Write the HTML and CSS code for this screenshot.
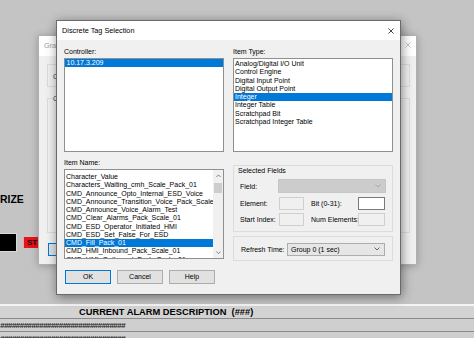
FILE: index.html
```html
<!DOCTYPE html>
<html>
<head>
<meta charset="utf-8">
<title>Discrete Tag Selection</title>
<link rel="stylesheet" href="styles.css">
</head>
<body>
<div class="screen">
  <div class="desk">
    <div class="hmi-label">RIZE</div>
    <div class="hmi-black"></div>
    <div class="hmi-stop">ST</div>

    <div class="win win-back">
      <div class="titlebar">
        <span class="title">Gra</span>
        <svg class="close" viewBox="0 0 7 7"><path d="M0.5 0.5L6.5 6.5M6.5 0.5L0.5 6.5" stroke="#a8a8a8" stroke-width="0.8" fill="none"/></svg>
      </div>
      <div class="back-body">
        <div class="back-group">C</div>
        <fieldset class="back-frame"><legend>C</legend></fieldset>
        <div class="back-btn"></div>
      </div>
    </div>

    <div class="win win-main">
      <div class="titlebar">
        <span class="title">Discrete Tag Selection</span>
        <svg class="close" viewBox="0 0 7 7"><path d="M0.5 0.5L6.5 6.5M6.5 0.5L0.5 6.5" stroke="#111" stroke-width="0.9" fill="none"/></svg>
      </div>
      <div class="dlg-body">
        <div class="col">
          <div class="lbl">Controller:</div>
          <div class="list list-ctrl">
            <div class="item sel">10.17.3.209</div>
          </div>
          <div class="lbl lbl-gap">Item Name:</div>
          <div class="list list-names">
            <div class="names">
              <div class="item">Character_Value</div>
              <div class="item">Characters_Waiting_cmh_Scale_Pack_01</div>
              <div class="item">CMD_Announce_Opto_Internal_ESD_Voice</div>
              <div class="item">CMD_Announce_Transition_Voice_Pack_Scale</div>
              <div class="item">CMD_Announce_Voice_Alarm_Test</div>
              <div class="item">CMD_Clear_Alarms_Pack_Scale_01</div>
              <div class="item">CMD_ESD_Operator_Initiated_HMI</div>
              <div class="item">CMD_ESD_Set_False_For_ESD</div>
              <div class="item sel">CMD_Fill_Pack_01</div>
              <div class="item">CMD_HMI_Inbound_Pack_Scale_01</div>
              <div class="item">CMD_HMI_Outbound_Pack_Scale_01</div>
            </div>
            <div class="vscroll">
              <div class="sarrow"><svg viewBox="0 0 6 4"><polyline points="0.5,3.5 3,1 5.5,3.5" fill="none" stroke="#606060" stroke-width="0.9"/></svg></div>
              <div class="strack"><div class="thumb"></div></div>
              <div class="sarrow"><svg viewBox="0 0 6 4"><polyline points="0.5,0.5 3,3 5.5,0.5" fill="none" stroke="#606060" stroke-width="0.9"/></svg></div>
            </div>
          </div>
          <div class="btns">
            <div class="btn btn-default">OK</div>
            <div class="btn">Cancel</div>
            <div class="btn">Help</div>
          </div>
        </div>

        <div class="col">
          <div class="lbl">Item Type:</div>
          <div class="list list-type">
            <div class="item">Analog/Digital I/O Unit</div>
            <div class="item">Control Engine</div>
            <div class="item">Digital Input Point</div>
            <div class="item">Digital Output Point</div>
            <div class="item sel">Integer</div>
            <div class="item">Integer Table</div>
            <div class="item">Scratchpad Bit</div>
            <div class="item">Scratchpad Integer Table</div>
          </div>
          <div class="group fields">
            <div class="legend">Selected Fields</div>
            <div class="fgrid">
              <span class="fl">Field:</span>
              <div class="combo combo-off"><svg viewBox="0 0 6 4"><polyline points="0.5,0.5 3,3 5.5,0.5" fill="none" stroke="#a5a5a5" stroke-width="0.9"/></svg></div>
              <span class="fl">Element:</span>
              <div class="box"></div>
              <span></span>
              <span class="fl">Bit (0-31):</span>
              <div class="box box-on"></div>
              <span class="fl">Start Index:</span>
              <div class="box"></div>
              <span></span>
              <span class="fl">Num Elements:</span>
              <div class="box"></div>
            </div>
          </div>
          <div class="group refresh">
            <span class="fl rl">Refresh Time:</span>
            <div class="combo combo-on"><span>Group 0 (1 sec)</span><svg viewBox="0 0 6 4"><polyline points="0.5,0.5 3,3 5.5,0.5" fill="none" stroke="#555" stroke-width="0.9"/></svg></div>
          </div>
        </div>
      </div>
    </div>
  </div>

  <div class="strip">
    <div class="hl"></div>
    <div class="band band-title">CURRENT ALARM DESCRIPTION&nbsp; (###)</div>
    <div class="band band-hash">################################</div>
    <div class="band band-hash last">################################</div>
  </div>
</div>
</body>
</html>
```

FILE: styles.css
```css
* { box-sizing: border-box; }
html, body { margin: 0; padding: 0; }
body {
  width: 474px;
  height: 338px;
  overflow: hidden;
  background: #c4c4c4;
  font-family: "Liberation Sans", Arial, sans-serif;
  font-size: 7px;
  color: #000;
}
.screen { display: flex; flex-direction: column; height: 338px; }
.desk { position: relative; height: 304px; flex: none; }

/* HMI canvas items */
.hmi-label {
  position: absolute; left: 0; top: 194px;
  font-weight: bold; font-size: 10.4px; line-height: 12px; color: #000;
}
.hmi-black {
  position: absolute; left: 0; top: 233px; width: 17px; height: 19px;
  background: #000; border: 1px solid #d9d9d9; border-left: none;
}
.hmi-stop {
  position: absolute; left: 23px; top: 237px; width: 20px; height: 11px;
  background: #e3141c; border-left: 1px solid #f3a0a0;
  font-weight: bold; font-size: 8px; line-height: 11px; padding-left: 3px; color: #2a0505;
}

/* windows */
.win { position: absolute; display: flex; flex-direction: column; background: #f0f0f0; }
.win-back {
  left: 38px; top: 35px; width: 379px; height: 230px;
  border: 1px solid #b0b0b0;
  box-shadow: 0 1px 8px rgba(0,0,0,0.25);
}
.win-main {
  left: 56px; top: 20px; width: 345px; height: 275px;
  border: 1px solid #6a6a6a;
  box-shadow: 1px 2px 10px rgba(0,0,0,0.45);
}
.titlebar {
  flex: none; height: 19px; background: #fff;
  display: flex; align-items: center; justify-content: space-between;
  padding: 0 6px 0 5px;
}
.win-back .titlebar { height: 20px; padding: 0 5px 2px 5px; }
.title { font-size: 7.3px; white-space: nowrap; }
.win-back .title { color: #9c9c9c; }
.close { width: 6px; height: 6px; display: block; }

/* back dialog body */
.back-body { flex: 1; display: flex; flex-direction: column; padding: 8px 6px 0 8px; }
.back-group { height: 23px; border: 1px solid #dcdcdc; padding-left: 5px; line-height: 23px; color: #333; }
.back-frame {
  margin: 7px 0 0; padding: 0; min-width: 0; height: 139px;
  border: 1px solid #dcdcdc;
}
.back-frame legend { padding: 0 1px; margin-left: 4px; line-height: 9px; font-size: 7px; color: #333; }
.back-btn {
  margin: 10px 0 0 1px; width: 46px; height: 13px;
  border: 1px solid #0078d7; background: #e1e1e1;
}

/* main dialog body */
.dlg-body {
  flex: 1;
  display: grid;
  grid-template-columns: 160px 160px;
  column-gap: 9px;
  align-content: start;
  padding: 6px 7px 0 7px;
}
.col { display: flex; flex-direction: column; }
.lbl { height: 11px; line-height: 11px; white-space: nowrap; }
.lbl-gap { margin-top: 5px; }
.list { background: #fff; border: 1px solid #8e8f8f; overflow: hidden; margin-top: 1px; }
.list-ctrl { height: 94px; }
.list-type { height: 94px; padding-top: 1px; }
.list-names { height: 90px; display: flex; }
.names { flex: 1; min-width: 0; padding-top: 3px; overflow: hidden; }
.item { height: 8.25px; line-height: 8.25px; padding-left: 1px; white-space: nowrap; }
.list-ctrl .item { padding-left: 1.5px; }
.sel { background: #0078d7; color: #fff; }

.vscroll { width: 10px; flex: none; background: #f0f0f0; display: flex; flex-direction: column; }
.sarrow { height: 11px; display: flex; align-items: center; justify-content: center; flex: none; }
.sarrow svg { width: 5px; height: 3.5px; display: block; }
.strack { flex: 1; padding: 2px 1px; }
.thumb { height: 10px; background: #cdcdcd; }

.btns { display: flex; gap: 6px; margin-top: 11px; padding-left: 1px; }
.btn {
  width: 46px; height: 14px; border: 1px solid #adadad; background: #e1e1e1;
  text-align: center; line-height: 12px; font-size: 7px;
}
.btn-default { border-color: #0078d7; }

.group { border: 1px solid #dcdcdc; }
.fields { margin-top: 13px; height: 67px; padding-left: 6px; }
.legend { line-height: 9px; height: 9px; margin-left: -2px; white-space: nowrap; }
.fgrid {
  margin-top: 4px;
  display: grid;
  grid-template-columns: 39px 25px 7px 47px 27px;
  grid-template-rows: 14px 13px 13px;
  row-gap: 3.5px;
}
.fl { align-self: center; white-space: nowrap; line-height: 9px; }
.combo { display: flex; align-items: center; justify-content: flex-end; }
.combo svg { width: 6px; height: 4px; display: block; flex: none; }
.combo-off {
  grid-column: 2 / 6; margin: 0 -1px 0 -1px;
  background: #cccccc; border: 1px solid #c6c6c6; padding-right: 4px;
}
.box { border: 1px solid #cfcfcf; background: #f0f0f0; }
.box-on { background: #fff; border-color: #7a7a7a; }

.refresh {
  margin-top: 4px; height: 25px;
  display: flex; align-items: center; padding: 1px 0 0 7px;
}
.rl { width: 46px; flex: none; }
.combo-on {
  width: 98px; height: 13px; background: #e6e6e6; border: 1px solid #adadad;
  justify-content: space-between; padding: 0 4px 0 3px; white-space: nowrap;
}

/* bottom strip */
.strip { flex: none; display: flex; flex-direction: column; }
.hl { height: 2px; background: #f4f4f4; }
.band { border-bottom: 1px solid #8a8a8a; overflow: hidden; white-space: nowrap; }
.band-title {
  height: 13px; line-height: 12px; background: #d3d3d3;
  font-weight: bold; font-size: 9.3px; padding-left: 79px; color: #000;
}
.band-hash {
  height: 13px; line-height: 13px; background: #cfcfcf;
  font-family: "Liberation Mono", monospace; font-size: 8px; letter-spacing: -0.9px;
  color: #1e1e1e; font-weight: bold;
}
.band-hash.last { height: 6px; border-bottom: none; }
```
